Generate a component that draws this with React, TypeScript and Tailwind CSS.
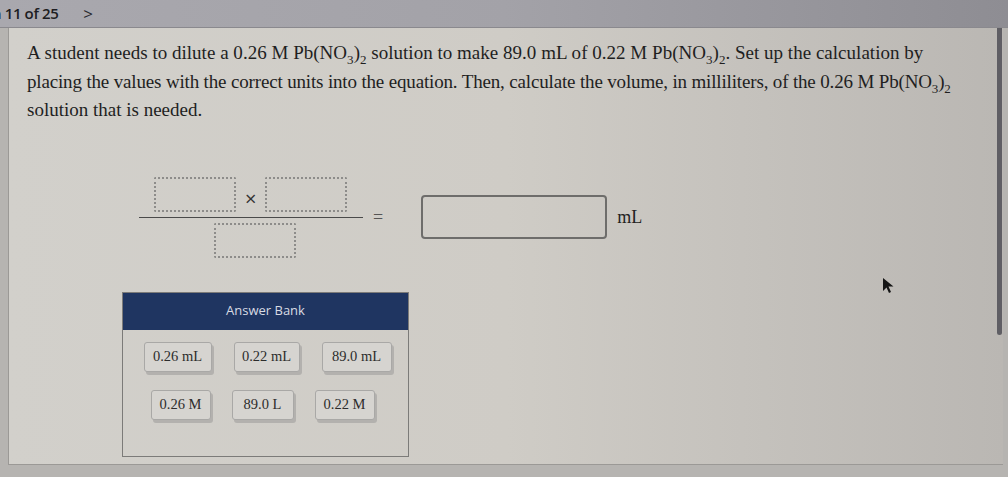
import React from "react";

const serif = "font-['Liberation_Serif','Times_New_Roman',serif]";
const sans = "font-['Open_Sans','Liberation_Sans',sans-serif]";

function Chem() {
  return (
    <>
      Pb(NO
      <span className="inline-block text-[13px] translate-y-[5px]">3</span>)
      <span className="inline-block text-[13px] translate-y-[5px]">2</span>
    </>
  );
}

function DropSlot({ className }: { className: string }) {
  return (
    <div
      className={`h-[35px] w-[82px] rounded-[2px] border-2 border-dotted border-[#8d8c8a] ${className}`}
    />
  );
}

function Chip({ label, w }: { label: string; w: string }) {
  return (
    <div
      className={`${w} h-[30px] rounded-[3px] border border-[#a9a8a6] bg-[#d6d4d0] shadow-[2px_3px_0_#b3b1ae] flex items-center justify-center text-[14.5px] text-[#2c2c2c] ${serif}`}
    >
      {label}
    </div>
  );
}

export default function App() {
  return (
    <div className="w-[1008px] h-[477px] overflow-hidden flex flex-col bg-[#a9a8a6]">
      {/* header bar */}
      <div
        className={`h-[28px] shrink-0 flex items-center gap-[25px] bg-gradient-to-r from-[#a9a8ae] via-[#a3a2a8] to-[#8e8d93] border-b border-[#8a898e] ${sans}`}
      >
        <span className="text-[15px] font-semibold text-[#1d1d22] -ml-[8px] tracking-tight">
          n 11 of 25
        </span>
        <span className="text-[17px] text-[#2a2a30]">&gt;</span>
      </div>

      <div className="flex-1 flex pl-[8px] pr-[5px] pb-[12px] bg-[#b6b4b1]">
        <div className="flex-1 flex bg-gradient-to-r from-[#d2d0cb] via-[#cfccc6] to-[#bab7b3] border-l border-b border-[#9b9996]">
          <div className="flex-1 flex flex-col relative">
            {/* question */}
            <p
              className={`pl-[18px] pt-[12px] text-[19px] leading-[26.5px] text-[#1f1f1f] whitespace-nowrap ${serif}`}
            >
              <span className="tracking-[0.02px]">
                A student needs to dilute a 0.26 M <Chem /> solution to make
                89.0 mL of 0.22 M <Chem />. Set up the calculation by
              </span>
              <br />
              <span className="tracking-[-0.16px]">
                placing the values with the correct units into the equation.
                Then, calculate the volume, in milliliters, of the 0.26 M{" "}
                <Chem />
              </span>
              <br />
              solution that is needed.
            </p>

            {/* equation */}
            <div className="flex items-center mt-[53px] ml-[130px]">
              <div className="flex flex-col w-[224px]">
                <div className="flex items-end pl-[15px]">
                  <DropSlot className="" />
                  <span
                    className={`mx-[9px] -mb-[2px] text-[20px] text-[#333] ${sans}`}
                  >
                    ×
                  </span>
                  <DropSlot className="" />
                </div>
                <div className="h-[1px] bg-[#4a4a4a] mt-[5px]" />
                <DropSlot className="mt-[5px] ml-[75px]" />
              </div>
              <span className={`ml-[10px] text-[18px] text-[#555] ${serif}`}>
                =
              </span>
              <div className="ml-[38px] h-[44px] w-[186px] rounded-[4px] border-2 border-[#6e6d6b]" />
              <span className={`ml-[10px] text-[18px] text-[#222] ${serif}`}>
                mL
              </span>
            </div>

            {/* answer bank */}
            <div className="mt-[34px] ml-[113px] w-[287px] h-[165px] border border-[#7c7b79] flex flex-col">
              <div
                className={`h-[37px] bg-[#1f3561] flex items-center justify-center text-[13px] text-[#d8dbe3] ${sans}`}
              >
                Answer Bank
              </div>
              <div className="flex justify-center gap-[22px] mt-[12px] pl-[4px]">
                <Chip label="0.26 mL" w="w-[68px]" />
                <Chip label="0.22 mL" w="w-[66px]" />
                <Chip label="89.0 mL" w="w-[70px]" />
              </div>
              <div className="flex justify-center gap-[21px] mt-[18px] -ml-[6px]">
                <Chip label="0.26 M" w="w-[60px]" />
                <Chip label="89.0 L" w="w-[62px]" />
                <Chip label="0.22 M" w="w-[60px]" />
              </div>
            </div>

            {/* mouse pointer */}
            <svg
              className="absolute left-[873px] top-[249px]"
              width="14"
              height="18"
              viewBox="0 0 14 18"
            >
              <path d="M1 1 L1 14 L4.5 10.5 L7 16 L9 15 L6.5 9.5 L11.5 9.5 Z" fill="#151515" />
            </svg>
          </div>

          {/* scrollbar */}
          <div className="w-[6px] flex flex-col">
            <div className="h-[307px] w-[5px] rounded-b-[3px] bg-[#5f5e64]" />
          </div>
        </div>
      </div>
    </div>
  );
}
